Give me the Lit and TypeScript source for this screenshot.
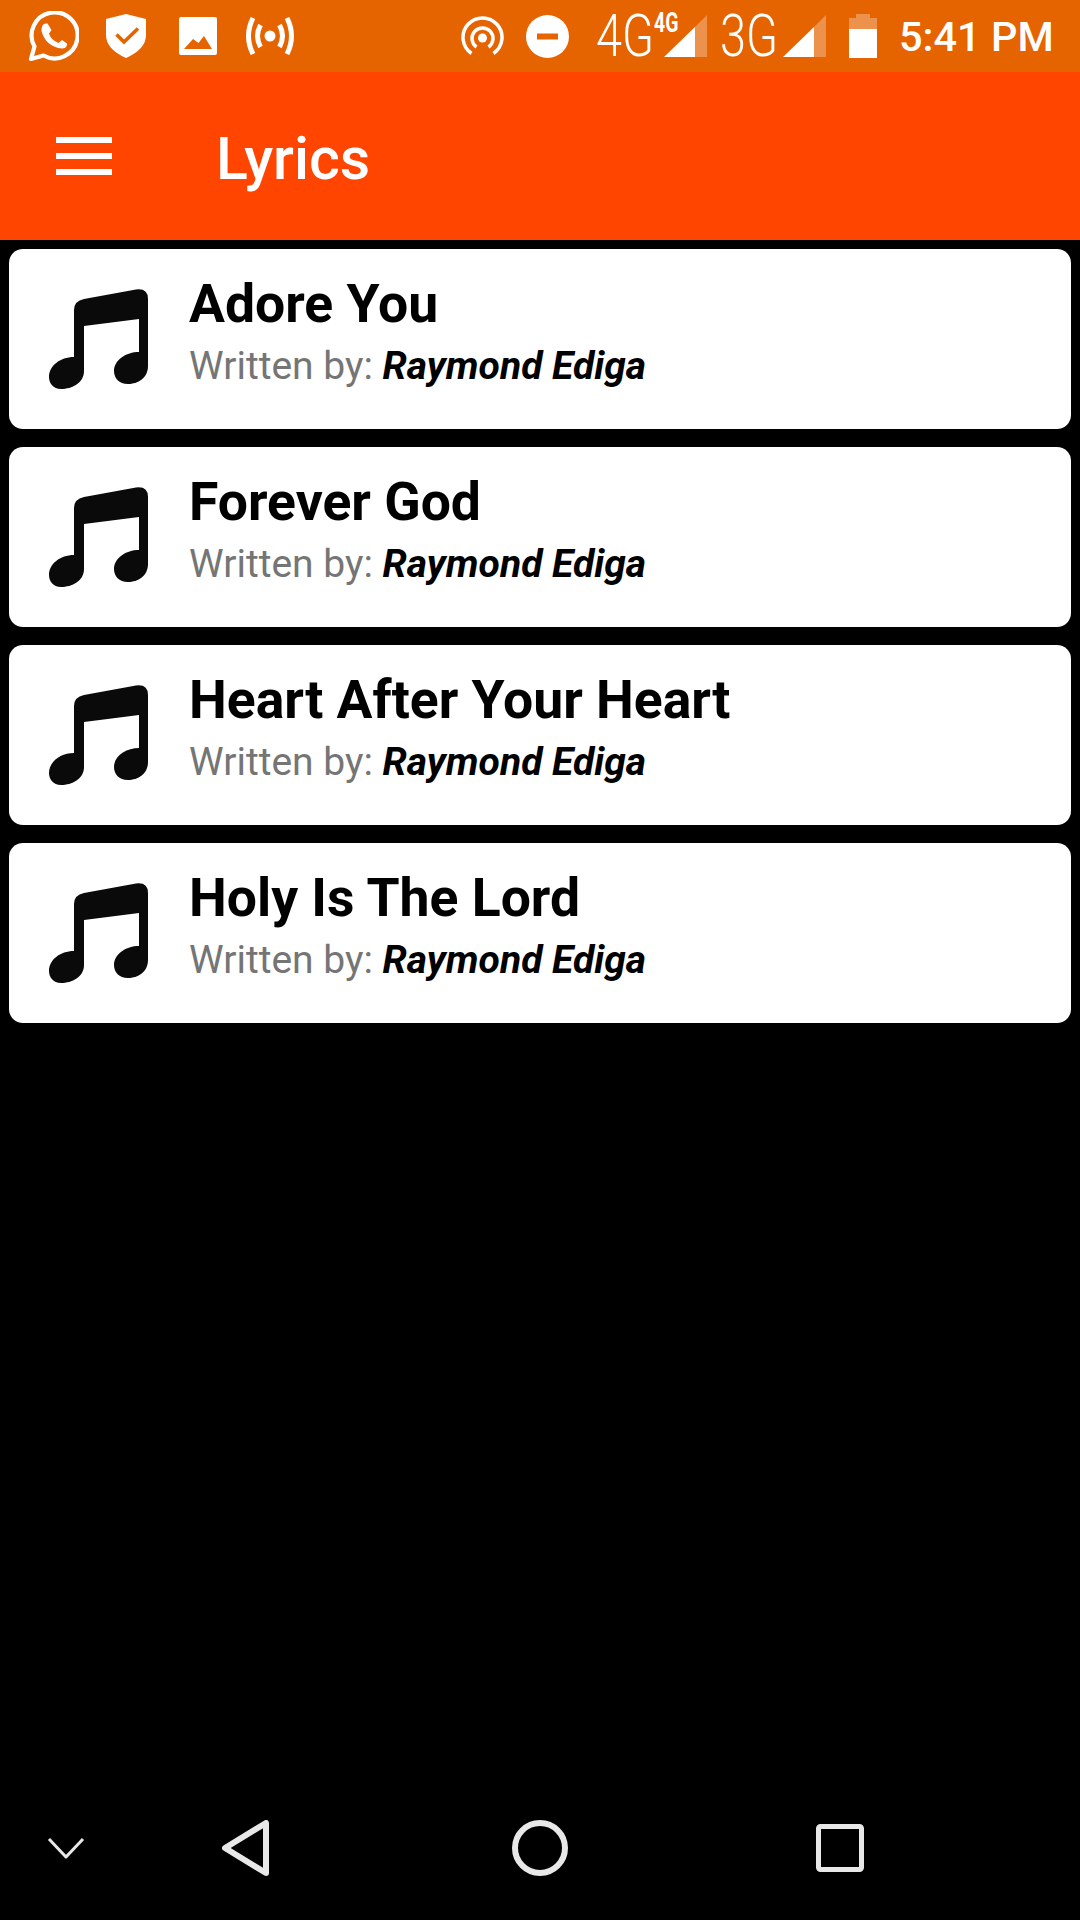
import { LitElement, html, css, svg } from 'lit';
import { customElement, state } from 'lit/decorators.js';

const noteIcon = svg`
  <path d="M26 69V22Q26 13 36 11L88 1.500Q100 0 100 11V78C100 90 90 96 80 96C71 96 66 90 66 83C66 72 78 64 91 64V31L36 38V83C36 95 24 101 13 101C5 101 1 95 1 89C1 78 12 69 26 69Z" />
`;

@customElement('app-root')
export class AppRoot extends LitElement {
  static override styles = css`
    :host {
      display: flex;
      flex-direction: column;
      width: 1080px;
      height: 1920px;
      background: #000;
      font-family: Roboto, sans-serif;
      overflow: hidden;
    }

    svg {
      display: block;
      flex: none;
    }

    .status {
      display: flex;
      align-items: center;
      flex: none;
      height: 72px;
      padding-left: 29px;
      background: #e66400;
      color: #fff;
    }

    .whatsapp { margin-right: 27px; }
    .shield { margin-right: 33px; }
    .picture { margin-right: 28px; }
    .hotspot { margin-right: 166px; }
    .cast { margin-right: 22px; }
    .dnd { margin-right: 27px; }

    .net {
      display: block;
      flex: none;
      width: 56px;
      font-size: 60px;
      font-weight: 300;
      line-height: 72px;
      white-space: nowrap;
      transform: scaleX(0.78);
      transform-origin: left center;
    }

    .net-3g { margin-left: 13px; margin-right: 7px; }

    .net-small {
      flex: none;
      width: 26px;
      margin-left: 2px;
      margin-right: -16px;
      align-self: flex-start;
      font-size: 27px;
      font-weight: 700;
      line-height: 25px;
      margin-top: 11px;
      white-space: nowrap;
      transform: scaleX(0.72);
      transform-origin: left center;
    }

    .battery { margin-left: 23px; margin-right: 22px; }

    .time {
      font-size: 41.500px;
      font-weight: 500;
      white-space: nowrap;
    }

    .toolbar {
      display: flex;
      align-items: center;
      flex: none;
      height: 168px;
      padding-left: 56px;
      background: #ff4500;
      color: #fff;
    }

    .menu {
      display: flex;
      flex-direction: column;
      gap: 10px;
      width: 56px;
      margin-right: 104px;
    }

    .menu span {
      height: 6px;
      background: #fff;
    }

    .toolbar h1 {
      margin: 5px 0 0;
      font-size: 59px;
      font-weight: 500;
      line-height: 66px;
    }

    .list {
      display: flex;
      flex-direction: column;
      flex: 1;
      gap: 18px;
      padding: 9px;
    }

    .card {
      display: flex;
      align-items: center;
      height: 180px;
      padding-left: 39px;
      border-radius: 14px;
      background: #fff;
    }

    .note {
      margin-right: 39px;
      fill: #0a0a0a;
    }

    .song {
      margin-top: -14px;
    }

    .title {
      font-size: 53.500px;
      font-weight: 700;
      line-height: 60px;
      color: #000;
    }

    .author {
      margin-top: 8px;
      font-size: 39px;
      line-height: 48px;
      color: #757575;
    }

    .author b {
      font-weight: 700;
      font-style: italic;
      color: #000;
    }

    .nav {
      display: flex;
      align-items: center;
      flex: none;
      height: 144px;
    }

    .nav svg {
      fill: none;
      stroke: #e8e8e8;
      stroke-linejoin: round;
    }

    .chevron { margin-left: 47px; margin-right: 137px; }
    .back { margin-right: 242px; }
    .home { margin-right: 248px; }
  `;

  @state()
  private songs: string[] = [
    'Adore You',
    'Forever God',
    'Heart After Your Heart',
    'Holy Is The Lord',
  ];

  private renderStatus() {
    return html`
      <div class="status">
        <svg class="whatsapp" width="50" height="50" viewBox="0 0 50 50">
          <path d="M2 48 5.500 35.500A23 23 0 1 1 14.500 44.500Z" fill="none" stroke="#fff" stroke-width="4.200" stroke-linejoin="round" />
          <path d="M13.500 14.500Q14.500 12.500 17 12.500H18.500L22.500 19 20 22.500Q22 29 29.500 32L33 29 38 32.500V34Q37 37.500 33 37.500Q17 36 12.500 20Q12.500 16.500 13.500 14.500Z" fill="#fff" />
        </svg>
        <svg class="shield" width="40" height="44" viewBox="0 0 40 44">
          <path d="M20 0 40 5V21Q40 35 20 44Q0 35 0 21V5Z" fill="#fff" />
          <path d="M10.500 20.500 18 28 32 14.500" fill="none" stroke="#e66400" stroke-width="3.600" />
        </svg>
        <svg class="picture" width="38" height="38" viewBox="0 0 38 38">
          <path d="M2 0H36Q38 0 38 2V36Q38 38 36 38H2Q0 38 0 36V2Q0 0 2 0ZM5 32H33L25 19 19.500 26 14 22Z" fill="#fff" fill-rule="evenodd" />
        </svg>
        <svg class="hotspot" width="50" height="38" viewBox="0 0 50 38" fill="none" stroke="#fff" stroke-width="5">
          <circle cx="25" cy="19" r="5.500" fill="#fff" stroke="none" />
          <path d="M15.500 8Q9.500 19 15.500 30" />
          <path d="M34.500 8Q40.500 19 34.500 30" />
          <path d="M8 1Q-1 19 8 37" />
          <path d="M42 1Q51 19 42 37" />
        </svg>
        <svg class="cast" width="43" height="40" viewBox="0 0 43 40" fill="none" stroke="#fff" stroke-width="3.500">
          <circle cx="21.500" cy="22" r="4.500" fill="#fff" stroke="none" />
          <path d="M15.500 31A10.500 10.500 0 1 1 27.500 31" />
          <path d="M10.500 37.500A19.500 19.500 0 1 1 32.500 37.500" />
        </svg>
        <svg class="dnd" width="43" height="43" viewBox="0 0 43 43">
          <circle cx="21.500" cy="21.500" r="21.500" fill="#fff" />
          <rect x="11" y="18.500" width="21" height="6" fill="#e66400" />
        </svg>
        <span class="net">4G</span>
        <span class="net-small">4G</span>
        <svg width="43" height="42" viewBox="0 0 43 42">
          <path d="M31 12 43 0V42H31Z" fill="#fff" opacity="0.3" />
          <path d="M31 12V42H0Z" fill="#fff" />
        </svg>
        <span class="net net-3g">3G</span>
        <svg width="43" height="42" viewBox="0 0 43 42">
          <path d="M31 12 43 0V42H31Z" fill="#fff" opacity="0.3" />
          <path d="M31 12V42H0Z" fill="#fff" />
        </svg>
        <svg class="battery" width="28" height="44" viewBox="0 0 28 44">
          <path d="M7 0H21V4H28V15H0V4H7Z" fill="#fff" opacity="0.3" />
          <rect y="15" width="28" height="29" fill="#fff" />
        </svg>
        <span class="time">5:41 PM</span>
      </div>
    `;
  }

  private renderSong(song: string) {
    return html`
      <div class="card">
        <svg class="note" width="102" height="102" viewBox="0 0 102 102">${noteIcon}</svg>
        <div class="song">
          <div class="title">${song}</div>
          <div class="author">Written by: <b>Raymond Ediga</b></div>
        </div>
      </div>
    `;
  }

  override render() {
    return html`
      ${this.renderStatus()}
      <div class="toolbar">
        <div class="menu"><span></span><span></span><span></span></div>
        <h1>Lyrics</h1>
      </div>
      <div class="list">${this.songs.map((song) => this.renderSong(song))}</div>
      <div class="nav">
        <svg class="chevron" width="38" height="22" viewBox="0 0 38 22" stroke-width="3">
          <path d="M2 2 19 20 36 2" />
        </svg>
        <svg class="back" width="48" height="56" viewBox="0 0 48 56" stroke-width="6">
          <path d="M44 3V53L3 28Z" />
        </svg>
        <svg class="home" width="56" height="56" viewBox="0 0 56 56" stroke-width="6">
          <circle cx="28" cy="28" r="25" />
        </svg>
        <svg width="48" height="48" viewBox="0 0 48 48" stroke-width="5">
          <rect x="2.500" y="2.500" width="43" height="43" rx="2" />
        </svg>
      </div>
    `;
  }
}

declare global {
  interface HTMLElementTagNameMap {
    'app-root': AppRoot;
  }
}
